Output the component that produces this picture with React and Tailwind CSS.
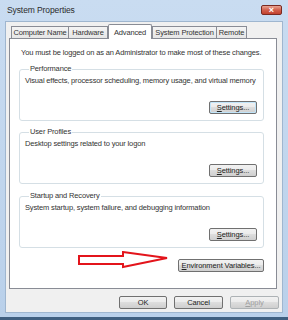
export default function App() {
  const font = { fontFamily: '"Liberation Sans", Arial, sans-serif' };
  const txt = "text-[7.5px] tracking-[-0.15px] text-[#333]";
  const btn =
    "flex items-center justify-center h-[13px] rounded-[2px] border border-[#707070] bg-[linear-gradient(#f2f2f2,#ebebeb_45%,#dddddd_50%,#cfcfcf)] text-[7.5px] tracking-[-0.1px] leading-none text-[#222]";
  const Group = ({ title, text, mt, focused }) => (
    <fieldset className={`min-w-0 ml-[9px] mr-[12px] ${mt} border border-[#d5dfe5] rounded-[3px] pl-[5px] pr-[6px] pb-[6px]`}>
      <legend className={`ml-[4px] px-[1px] leading-[10px] ${txt}`}>{title}</legend>
      <div className={`mt-[2px] leading-[10px] whitespace-nowrap ${txt}`}>{text}</div>
      <div className="mt-[15px] flex justify-end">
        <div
          className={`${btn} w-[48px] ${focused ? "border-[#3c7fb1] shadow-[inset_0_0_0_1px_#c0e4f9]" : ""}`}
        >
          <span><u>S</u>ettings...</span>
        </div>
      </div>
    </fieldset>
  );
  const tabs = ["Computer Name", "Hardware", "Advanced", "System Protection", "Remote"];
  const widths = ["w-[58px]", "w-[39px]", "w-[44px]", "w-[65px]", "w-[30px]"];
  return (
    <div
      style={font}
      className="w-[288px] h-[320px] flex flex-col bg-[linear-gradient(#c9dcf1,#b9d0ea)] border-b-[3px] border-[#3f5f80]"
    >
      <div className="h-[21px] flex items-center justify-between pl-[7px] pr-[6px]">
        <span className="text-[8.5px] tracking-[-0.1px] text-[#2b2b2b]">System Properties</span>
        <div className="w-[21px] h-[10px] mt-[-1px] rounded-[2px] border border-[#7a2a22] bg-[linear-gradient(#e8a493,#d2604d_50%,#c2412e)] flex items-center justify-center text-white text-[9px] font-bold leading-none">
          ×
        </div>
      </div>
      <div className="ml-[5px] mr-[5px] h-[292px] bg-[#f0f0f0] border border-[#9fb6cf] flex flex-col">
        <div className="ml-[5px] mt-[1px] flex items-end h-[15px]">
          {tabs.map((t, i) =>
            i === 2 ? (
              <div
                key={t}
                className={`${widths[i]} h-[15px] relative z-10 -mb-px bg-white border border-b-0 border-[#898c95] rounded-t-[2px] flex items-start justify-center pt-[3px] leading-[9px] ${txt}`}
              >
                {t}
              </div>
            ) : (
              <div
                key={t}
                className={`${widths[i]} h-[12px] bg-[linear-gradient(#f4f4f4,#e6e6e6)] border border-b-0 border-[#898c95] ${i === 1 || i === 4 ? "border-l-0" : ""} flex items-center justify-center whitespace-nowrap pt-[1px] ${txt}`}
              >
                {t}
              </div>
            )
          )}
        </div>
        <div className="ml-[3px] mr-[5px] h-[251px] bg-white border border-[#898c95] flex flex-col relative">
          <div className={`mt-[9px] ml-[11px] leading-[10px] whitespace-nowrap ${txt}`}>
            You must be logged on as an Administrator to make most of these changes.
          </div>
          <Group
            mt="mt-[6px]"
            title="Performance"
            text="Visual effects, processor scheduling, memory usage, and virtual memory"
            focused
          />
          <Group mt="mt-[6px]" title="User Profiles" text="Desktop settings related to your logon" />
          <Group mt="mt-[7px]" title="Startup and Recovery" text="System startup, system failure, and debugging information" />
          <div className="mt-[11px] mr-[12px] flex justify-end">
            <div className={`${btn} w-[86px] border-[#3c7fb1] bg-[linear-gradient(#eaf6fd,#d9f0fc_45%,#bee6fd_50%,#a7d9f5)]`}>
              <span><u>E</u>nvironment Variables...</span>
            </div>
          </div>
          <svg className="absolute left-[68px] top-[212px]" width="92" height="18" viewBox="0 0 92 18">
            <polygon
              points="1,5 45,5 45,1 89,7 45,16 45,13 1,13"
              fill="white"
              stroke="#e3141b"
              strokeWidth="2"
              strokeLinejoin="miter"
            />
          </svg>
        </div>
        <div className="mt-[7px] flex justify-end gap-[7px] mr-[3px]">
          <div className={`${btn} w-[48px]`}>OK</div>
          <div className={`${btn} w-[49px]`}>Cancel</div>
          <div className={`${btn} w-[49px] border-[#adb2b5] bg-[#f4f4f4] text-[#a0a0a0]`}>
            <span><u>A</u>pply</span>
          </div>
        </div>
      </div>
    </div>
  );
}
